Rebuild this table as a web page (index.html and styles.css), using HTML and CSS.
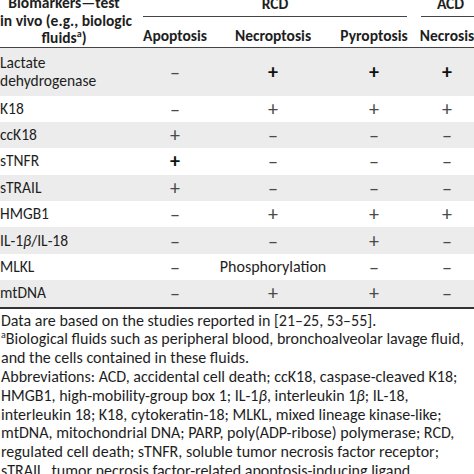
FILE: index.html
```html
<!DOCTYPE html>
<html>
<head>
<meta charset="utf-8">
<link rel="stylesheet" href="styles.css">
</head>
<body>
<div class="page">
  <div class="table">
    <div class="head">
      <div class="hcell label-h">Biomarkers—test<br>in vivo (e.g., biologic<br>fluids<sup>a</sup>)</div>
      <div class="group rcd"><span class="gname">RCD</span><span class="rule"></span></div>
      <div class="group acd"><span class="gname">ACD</span><span class="rule"></span></div>
      <div class="hcell c2">Apoptosis</div>
      <div class="hcell c3">Necroptosis</div>
      <div class="hcell c4">Pyroptosis</div>
      <div class="hcell c5">Necrosis</div>
    </div>
    <div class="row tall shade"><div class="lab">Lactate<br>dehydrogenase</div><div class="v m">–</div><div class="v p b">+</div><div class="v p b">+</div><div class="v p b">+</div></div>
    <div class="row"><div class="lab">K18</div><div class="v m">–</div><div class="v p">+</div><div class="v p">+</div><div class="v p">+</div></div>
    <div class="row shade"><div class="lab">ccK18</div><div class="v p">+</div><div class="v m">–</div><div class="v m">–</div><div class="v m">–</div></div>
    <div class="row"><div class="lab">sTNFR</div><div class="v p b">+</div><div class="v m">–</div><div class="v m">–</div><div class="v m">–</div></div>
    <div class="row shade"><div class="lab">sTRAIL</div><div class="v p">+</div><div class="v m">–</div><div class="v m">–</div><div class="v m">–</div></div>
    <div class="row"><div class="lab">HMGB1</div><div class="v m">–</div><div class="v p">+</div><div class="v p">+</div><div class="v p">+</div></div>
    <div class="row shade"><div class="lab">IL-1<i>β</i>/IL-18</div><div class="v m">–</div><div class="v m">–</div><div class="v p">+</div><div class="v m">–</div></div>
    <div class="row"><div class="lab">MLKL</div><div class="v m">–</div><div class="v word">Phosphorylation</div><div class="v m">–</div><div class="v m">–</div></div>
    <div class="row shade last"><div class="lab">mtDNA</div><div class="v m">–</div><div class="v p">+</div><div class="v p">+</div><div class="v m">–</div></div>
  </div>
  <div class="notes">
    <span class="ln">Data are based on the studies reported in [21–25, 53–55].</span>
    <span class="ln"><sup>a</sup>Biological fluids such as peripheral blood, bronchoalveolar lavage fluid,</span>
    <span class="ln">and the cells contained in these fluids.</span>
    <span class="ln">Abbreviations: ACD, accidental cell death; ccK18, caspase-cleaved K18;</span>
    <span class="ln">HMGB1, high-mobility-group box 1; IL-1<i>β</i>, interleukin 1<i>β</i>; IL-18,</span>
    <span class="ln">interleukin 18; K18, cytokeratin-18; MLKL, mixed lineage kinase-like;</span>
    <span class="ln">mtDNA, mitochondrial DNA; PARP, poly(ADP-ribose) polymerase; RCD,</span>
    <span class="ln">regulated cell death; sTNFR, soluble tumor necrosis factor receptor;</span>
    <span class="ln">sTRAIL, tumor necrosis factor-related apoptosis-inducing ligand.</span>
  </div>
</div>
</body>
</html>
```
FILE: styles.css
```css
html, body {
  margin: 0;
  padding: 0;
  overflow: hidden;
  background: #fff;
}
.page {
  width: 474px;
  height: 474px;
  overflow: hidden;
  font-family: Carlito, Lato, "Liberation Sans", sans-serif;
  color: #1e1e1e;
  font-size: 16px;
}
.table {
  width: 480px;
  margin-top: -6px;
}
.head {
  display: grid;
  grid-template-columns: 138px 74px 122px 80px 66px;
  grid-template-rows: 24px 29px;
  border-bottom: 1.5px solid #444;
  font-weight: 700;
  font-size: 15.5px;
}
.label-h {
  grid-column: 1;
  grid-row: 1 / 3;
  text-align: center;
  line-height: 17.5px;
  white-space: nowrap;
  padding-right: 10px;
}
.label-h sup {
  font-size: 10px;
  line-height: 0;
}
.group {
  grid-row: 1;
  display: flex;
  flex-direction: column;
  align-items: stretch;
  text-align: center;
  line-height: 20px;
}
.rcd { grid-column: 2 / 5; padding: 0 7px 0 5px; }
.acd { grid-column: 5; padding: 0 0 0 7px; }
.rule {
  display: block;
  height: 0;
  border-top: 1.5px solid #444;
  margin-top: 2px;
}
.hcell.c2, .hcell.c3, .hcell.c4, .hcell.c5 {
  grid-row: 2;
  text-align: center;
  line-height: 20px;
  padding-top: 8px;
  white-space: nowrap;
}
.c2 { grid-column: 2; }
.c3 { grid-column: 3; }
.c4 { grid-column: 4; }
.c5 { grid-column: 5; }
.row {
  display: grid;
  grid-template-columns: 138px 74px 122px 80px 66px;
  height: 26.4px;
  align-items: center;
}
.row.tall { height: 47.5px; }
.row.shade { background: #ececec; }
.row.last { border-bottom: 2.5px solid #333; }
.lab {
  line-height: 18px;
  white-space: nowrap;
  font-size: 15.5px;
}
.v {
  text-align: center;
  color: #4a4a4a;
  font-size: 20px;
  line-height: 20px;
}
.v.b { color: #111; font-weight: 700; }
.v.word { font-size: 16px; color: #1e1e1e; white-space: nowrap; }
.notes {
  padding-top: 3px;
  line-height: 18.8px;
}
.ln {
  display: block;
  white-space: nowrap;
  padding-left: 1px;
  height: 18.8px;
}
.ln sup {
  font-size: 10px;
  line-height: 0;
}
```
